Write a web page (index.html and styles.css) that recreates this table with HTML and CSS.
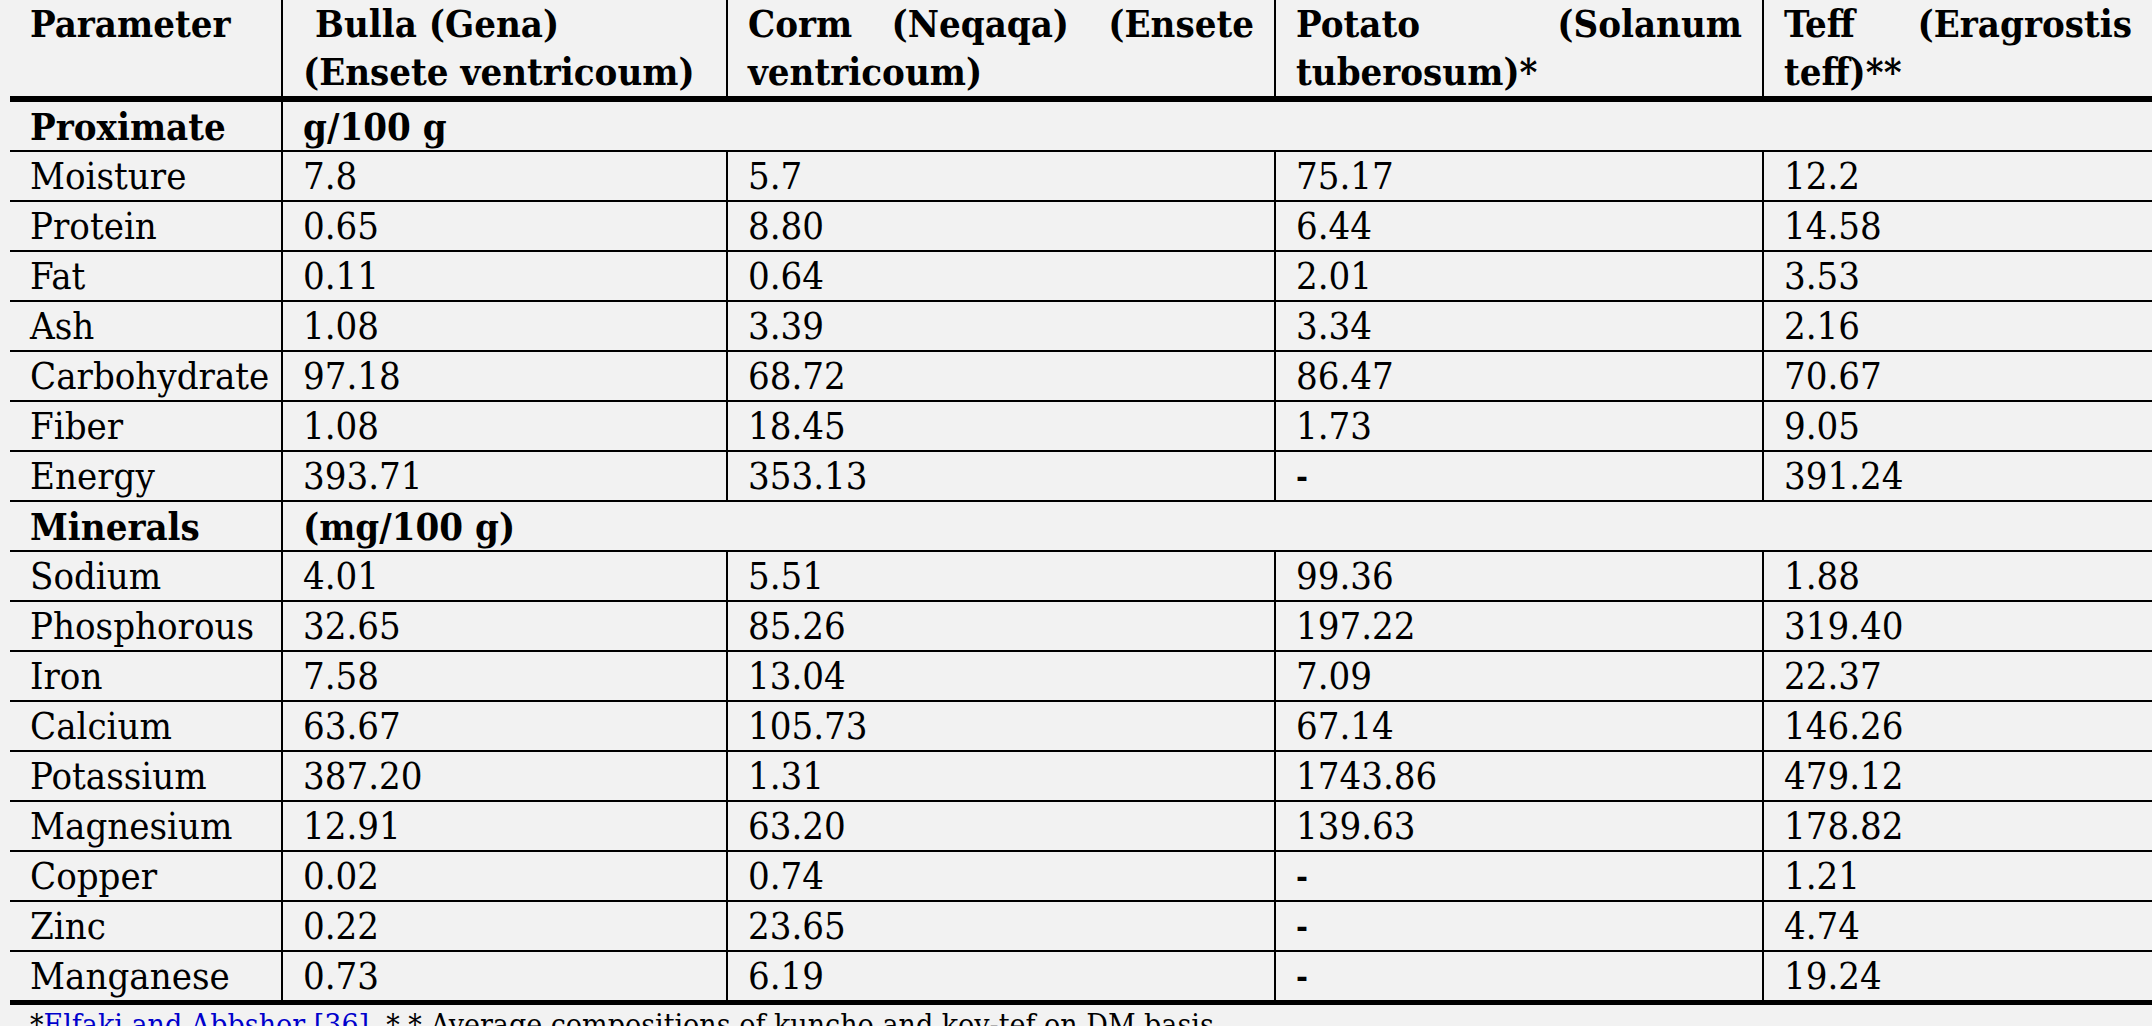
FILE: index.html
```html
<!DOCTYPE html>
<html lang="en">
<head>
  <meta charset="UTF-8" />
  <title>Proximate and mineral composition</title>
  <link rel="stylesheet" href="styles.css">
</head>
<body>

  <table class="comp-table">
    <colgroup>
      <col class="c-param">
      <col class="c-bulla">
      <col class="c-corm">
      <col class="c-potato">
      <col class="c-teff">
    </colgroup>
    <thead>
      <tr>
        <th>Parameter</th>
        <th><span class="indent">Bulla (Gena)</span><br>(Ensete ventricoum)</th>
        <th><span class="jline">Corm (Neqaqa) (Ensete</span>ventricoum)</th>
        <th><span class="jline">Potato (Solanum</span>tuberosum)*</th>
        <th><span class="jline">Teff (Eragrostis</span>teff)**</th>
      </tr>
    </thead>
    <tbody>
      <tr class="group">
        <td>Proximate</td>
        <td colspan="4">g/100 g</td>
      </tr>
      <tr><td>Moisture</td><td>7.8</td><td>5.7</td><td>75.17</td><td>12.2</td></tr>
      <tr><td>Protein</td><td>0.65</td><td>8.80</td><td>6.44</td><td>14.58</td></tr>
      <tr><td>Fat</td><td>0.11</td><td>0.64</td><td>2.01</td><td>3.53</td></tr>
      <tr><td>Ash</td><td>1.08</td><td>3.39</td><td>3.34</td><td>2.16</td></tr>
      <tr><td>Carbohydrate</td><td>97.18</td><td>68.72</td><td>86.47</td><td>70.67</td></tr>
      <tr><td>Fiber</td><td>1.08</td><td>18.45</td><td>1.73</td><td>9.05</td></tr>
      <tr><td>Energy</td><td>393.71</td><td>353.13</td><td class="dash">-</td><td>391.24</td></tr>
      <tr class="group">
        <td>Minerals</td>
        <td colspan="4">(mg/100 g)</td>
      </tr>
      <tr><td>Sodium</td><td>4.01</td><td>5.51</td><td>99.36</td><td>1.88</td></tr>
      <tr><td>Phosphorous</td><td>32.65</td><td>85.26</td><td>197.22</td><td>319.40</td></tr>
      <tr><td>Iron</td><td>7.58</td><td>13.04</td><td>7.09</td><td>22.37</td></tr>
      <tr><td>Calcium</td><td>63.67</td><td>105.73</td><td>67.14</td><td>146.26</td></tr>
      <tr><td>Potassium</td><td>387.20</td><td>1.31</td><td>1743.86</td><td>479.12</td></tr>
      <tr><td>Magnesium</td><td>12.91</td><td>63.20</td><td>139.63</td><td>178.82</td></tr>
      <tr><td>Copper</td><td>0.02</td><td>0.74</td><td class="dash">-</td><td>1.21</td></tr>
      <tr><td>Zinc</td><td>0.22</td><td>23.65</td><td class="dash">-</td><td>4.74</td></tr>
      <tr><td>Manganese</td><td>0.73</td><td>6.19</td><td class="dash">-</td><td>19.24</td></tr>
    </tbody>
  </table>

  <p class="table-note">*<a href="#ref36">Elfaki and Abbshor [36]</a>. * * Average compositions of kuncho and koy-tef on DM basis</p>

</body>
</html>
```

FILE: styles.css
```css
* {
  box-sizing: border-box;
}

html,
body {
  margin: 0;
  background: #f2f2f2;
  overflow: hidden;
}

body {
  padding: 0 0 0 10px;
  font-family: "DejaVu Serif Condensed", "DejaVu Serif", serif;
  font-stretch: condensed;
  font-size: 38px;
  line-height: 48px;
  color: #000;
}

.comp-table {
  width: 2142px;
  border-collapse: collapse;
  table-layout: fixed;
}

.c-param { width: 272px; }
.c-bulla { width: 445px; }
.c-corm { width: 548px; }
.c-potato { width: 488px; }
.c-teff { width: 389px; }

.comp-table th,
.comp-table td {
  padding: 0 20px;
  text-align: left;
  vertical-align: top;
  border-left: 2px solid #000;
  border-bottom: 2px solid #000;
  white-space: nowrap;
}

.comp-table td {
  line-height: 47px;
  padding-top: 1px;
}

.comp-table th:first-child,
.comp-table td:first-child {
  border-left: none;
}

.comp-table th {
  font-weight: bold;
  border-bottom: 6px solid #000;
}

.comp-table tbody tr:last-child td {
  border-bottom: 5px solid #000;
}

/* header lines stretched edge to edge, as in the source layout */
.jline {
  display: block;
  text-align: justify;
  text-align-last: justify;
}

.indent {
  padding-left: 12px;
}

.group td {
  font-weight: bold;
}

.dash {
  font-size: 32px;
  font-weight: bold;
}

.table-note {
  margin: 0;
  padding-left: 20px;
  font-size: 30px;
  line-height: 40px;
}

.table-note a {
  color: #0000cc;
}
```
